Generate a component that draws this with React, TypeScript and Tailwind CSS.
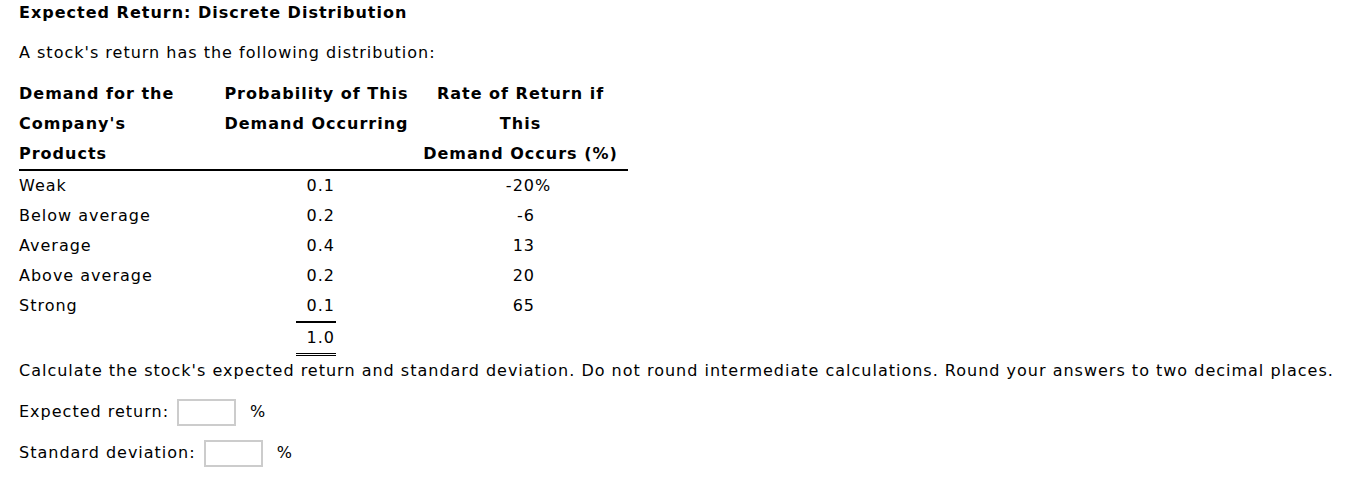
const rows = [
  { label: "Weak", prob: "0.1", ret: "-20", pct: true },
  { label: "Below average", prob: "0.2", ret: "-6", pct: false },
  { label: "Average", prob: "0.4", ret: "13", pct: false },
  { label: "Above average", prob: "0.2", ret: "20", pct: false },
  { label: "Strong", prob: "0.1", ret: "65", pct: false },
];

const App = () => {
  return (
    <div className="min-h-[488px] bg-white pl-[19px] pt-px text-[16px] tracking-[1px] text-black [font-family:'DejaVu_Sans',Verdana,sans-serif]">
      <h1 className="font-bold leading-6">Expected Return: Discrete Distribution</h1>
      <p className="mt-[16px] leading-6">A stock's return has the following distribution:</p>

      <div className="mt-[14px] w-[609px]">
        <div className="grid grid-cols-[196px_203px_210px] border-b-2 border-black font-bold leading-[30px]">
          <div>
            Demand for the
            <br />
            Company's
            <br />
            Products
          </div>
          <div className="text-center">
            Probability of This
            <br />
            Demand Occurring
          </div>
          <div className="pr-[5px] text-center">
            Rate of Return if
            <br />
            This
            <br />
            Demand Occurs (%)
          </div>
        </div>

        {rows.map((r, i) => (
          <div key={i} className="grid grid-cols-[196px_203px_210px] leading-[30px]">
            <div>{r.label}</div>
            <div className="ml-[81px] w-[40px] pr-[1px] text-right">{r.prob}</div>
            <div className="flex">
              <span className="w-[117px] text-right">{r.ret}</span>
              {r.pct && <span>%</span>}
            </div>
          </div>
        ))}

        <div className="grid grid-cols-[196px_203px_210px] leading-[30px]">
          <div />
          <div className="ml-[81px] w-[40px] border-t-2 border-b-[3px] border-double border-t-solid border-black pr-[1px] text-right">
            1.0
          </div>
          <div />
        </div>
      </div>

      <p className="leading-[30px]">
        Calculate the stock's expected return and standard deviation. Do not round intermediate calculations. Round your
        answers to two decimal places.
      </p>

      <div className="mt-[11px] flex h-[30px] items-center">
        <span>Expected return:</span>
        <input className="ml-[8px] h-[27px] w-[59px] border-2 border-[#cccccc] bg-white outline-none" />
        <span className="ml-[14px]">%</span>
      </div>

      <div className="mt-[11px] flex h-[30px] items-center">
        <span>Standard deviation:</span>
        <input className="ml-[8px] h-[27px] w-[59px] border-2 border-[#cccccc] bg-white outline-none" />
        <span className="ml-[14px]">%</span>
      </div>
    </div>
  );
};

export default App;
